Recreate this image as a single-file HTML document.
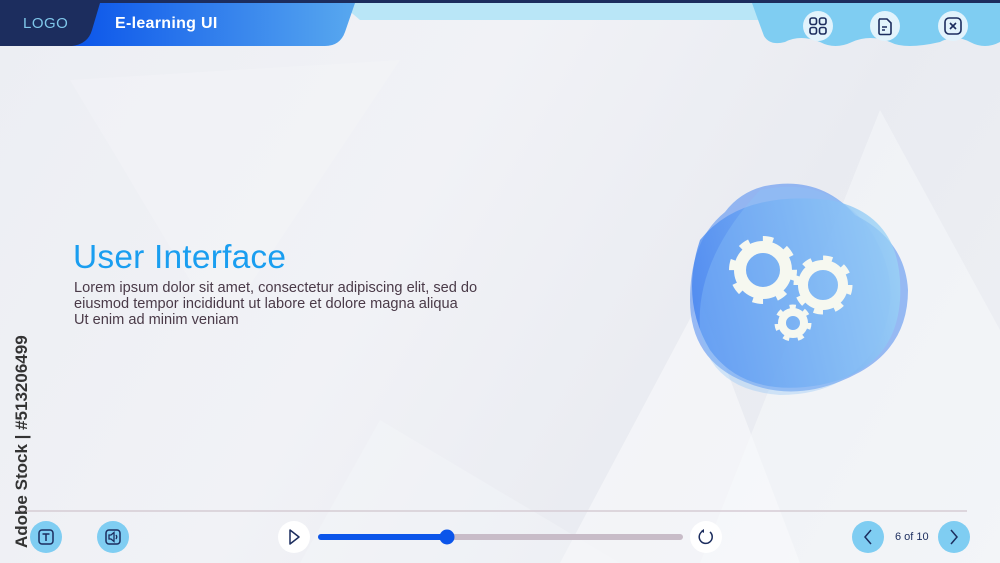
<!DOCTYPE html>
<html><head><meta charset="utf-8"><style>
*{margin:0;padding:0;box-sizing:border-box}
body{width:1000px;height:563px;overflow:hidden;position:relative;font-family:"Liberation Sans",sans-serif;
background:linear-gradient(120deg,#eceef3 0%,#f1f2f6 40%,#e9ebf1 70%,#eef0f4 100%)}
.abs{position:absolute}
</style></head><body>
<svg class="abs" style="left:0;top:0" width="1000" height="563">
<polygon points="70,80 400,60 220,330" fill="#f6f7fa" opacity=".35"/>
<polygon points="560,563 700,300 800,563" fill="#ffffff" opacity=".45"/>
<polygon points="880,110 1000,330 1000,563 700,563" fill="#f8f9fb" opacity=".5"/>
<polygon points="380,420 620,563 300,563" fill="#f6f7fa" opacity=".4"/>
<!-- header -->
<rect x="0" y="0" width="1000" height="4" fill="#1c2d5e"/>
<path d="M0,46 L0,0 L110,0 L110,46Z" fill="#1c2d5e"/>
<path d="M340,3 L760,3 L760,20 L360,20Z" fill="#b9e6f7"/>
<defs><linearGradient id="hg" x1="0" x2="1"><stop offset="0" stop-color="#0b55ea"/><stop offset="1" stop-color="#58a8ef"/></linearGradient>
<linearGradient id="bl" x1="0" y1="0.6" x2="1" y2="0.4"><stop offset="0" stop-color="#3d7ff0"/><stop offset="1" stop-color="#9ad4f6"/></linearGradient></defs>
<path d="M100,3 L355,3 L345,32 Q340,46 325,46 L72,46 Q88,44 92,30Z" fill="url(#hg)"/>
<path d="M752,3 L1000,3 L1000,42 Q985,50 970,42 Q955,34 940,42 Q905,50 890,42 Q870,34 852,42 Q835,50 820,42 Q800,34 785,42 Q770,46 764,36 Q758,20 752,3Z" fill="#7fcdf2"/>
<circle cx="818" cy="26" r="15" fill="#e2f3fc"/>
<circle cx="885" cy="26" r="15" fill="#e2f3fc"/>
<circle cx="953" cy="26" r="15" fill="#e2f3fc"/>
<g fill="none" stroke="#1c2d5e" stroke-width="1.6">
<rect x="810" y="18" width="6.5" height="6.5" rx="2"/><rect x="819.5" y="18" width="6.5" height="6.5" rx="2"/>
<rect x="810" y="27.5" width="6.5" height="6.5" rx="2"/><rect x="819.5" y="27.5" width="6.5" height="6.5" rx="2"/>
<path d="M879,19 h8 l4,4 v10 a1.5,1.5 0 0 1 -1.5,1.5 h-9 a1.5,1.5 0 0 1 -1.5,-1.5 v-12.5 a1.5,1.5 0 0 1 1.5,-1.5z M882,27 h5 M882,30 h3"/>
<rect x="945" y="18" width="16" height="16" rx="4"/><path d="M950,23 l6,6 M956,23 l-6,6"/>
</g>
<!-- blobs -->
<path d="M765,186 Q820,175 855,215 Q905,240 908,290 Q908,345 860,372 Q800,405 745,382 Q690,360 690,300 Q690,240 725,212 Q740,192 765,186Z" fill="#4a88f0" opacity=".55"/>
<path d="M700,240 Q740,190 830,200 Q905,215 900,300 Q895,370 820,385 Q745,398 710,350 Q680,300 700,240Z" fill="url(#bl)" opacity=".75"/>
<path d="M760,190 Q830,175 870,230 Q905,285 880,340 Q850,395 780,395 Q710,390 700,330 Q695,260 760,190Z" fill="#8cc4f6" opacity=".35"/>
<g fill="none" stroke="#f6f8f0">
<circle cx="763" cy="270" r="23" stroke-width="12"/>
<circle cx="763" cy="270" r="30" stroke-width="8" stroke-dasharray="10 13.5"/>
<circle cx="823" cy="285" r="20" stroke-width="10"/>
<circle cx="823" cy="285" r="26" stroke-width="7" stroke-dasharray="9 11.4"/>
<circle cx="793" cy="323" r="11" stroke-width="8"/>
<circle cx="793" cy="323" r="16" stroke-width="5" stroke-dasharray="6 8.4"/>
</g>
<!-- bottom -->
<line x1="16" y1="511" x2="967" y2="511" stroke="#d6ccd4" stroke-width="1.5"/>
<circle cx="46" cy="537" r="16" fill="#7fcdf2"/>
<rect x="39" y="530" width="14" height="14" rx="3" fill="none" stroke="#1c2d5e" stroke-width="1.5"/>
<path d="M42.5,534 h7 M46,534 v7" stroke="#1c2d5e" stroke-width="1.5"/>
<circle cx="113" cy="537" r="16" fill="#7fcdf2"/>
<rect x="106" y="530" width="14" height="14" rx="3" fill="none" stroke="#1c2d5e" stroke-width="1.5"/>
<path d="M109,535 h2 l3,-2.5 v9 l-3,-2.5 h-2z M116,535 q1.5,2 0,4" fill="none" stroke="#1c2d5e" stroke-width="1.3"/>
<circle cx="294" cy="537" r="16" fill="#fff"/>
<path d="M290,530 l9,7 l-9,7z" fill="none" stroke="#1c2d5e" stroke-width="1.5" stroke-linejoin="round"/>
<line x1="321" y1="537" x2="680" y2="537" stroke="#c8bcc8" stroke-width="6" stroke-linecap="round"/>
<line x1="321" y1="537" x2="447" y2="537" stroke="#0b55ea" stroke-width="6" stroke-linecap="round"/>
<circle cx="447" cy="537" r="7.5" fill="#0b55ea"/>
<circle cx="706" cy="537" r="16" fill="#fff"/>
<path d="M703,531 a6.5,6.5 0 1 0 7,1" fill="none" stroke="#1c2d5e" stroke-width="1.5"/>
<path d="M701,531 l3,-2 l0,4z" fill="#1c2d5e"/>
<circle cx="868" cy="537" r="16" fill="#7fcdf2"/>
<path d="M871,530 l-6,7 l6,7" fill="none" stroke="#1c2d5e" stroke-width="1.5"/>
<circle cx="954" cy="537" r="16" fill="#7fcdf2"/>
<path d="M951,530 l6,7 l-6,7" fill="none" stroke="#1c2d5e" stroke-width="1.5"/>
</svg>
<div class="abs" style="left:23px;top:15px;color:#7fc7ea;font-size:15px;letter-spacing:.5px">LOGO</div>
<div class="abs" style="left:115px;top:15px;color:#fff;font-size:16px;font-weight:bold;letter-spacing:.3px">E-learning UI</div>
<div class="abs" style="left:73px;top:239px;color:#1a9ef0;font-size:33.5px;letter-spacing:.2px">User Interface</div>
<div class="abs" style="left:74px;top:280px;color:#4a3a48;font-size:14.6px;line-height:16px;white-space:nowrap">Lorem ipsum dolor sit amet, consectetur adipiscing elit, sed do<br>eiusmod tempor incididunt ut labore et dolore magna aliqua<br>Ut enim ad minim veniam</div>
<div class="abs" style="left:895px;top:531px;color:#1c2d5e;font-size:11px">6 of 10</div>
<div class="abs" style="left:12px;top:548px;transform:rotate(-90deg);transform-origin:0 0;color:#333;font-size:17px;font-weight:bold;white-space:nowrap;width:226px">Adobe Stock | #513206499</div>
</body></html>
